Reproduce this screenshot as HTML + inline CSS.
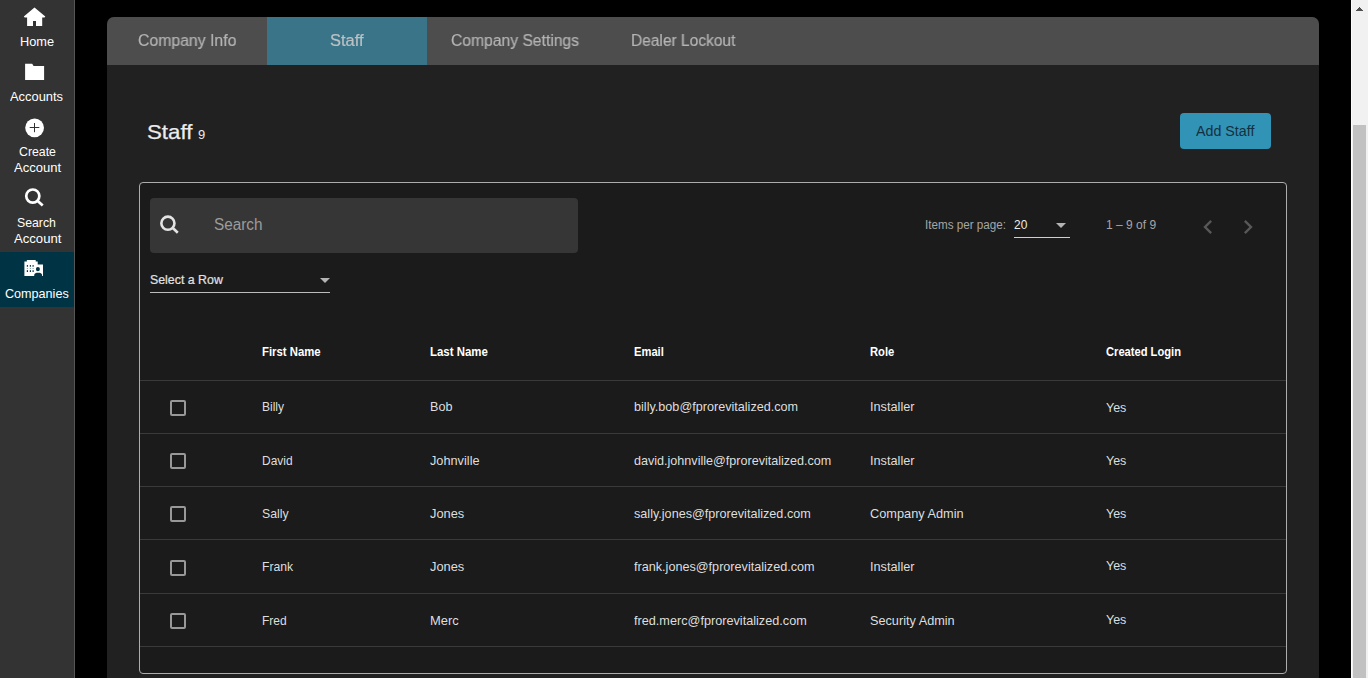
<!DOCTYPE html>
<html lang="en"><head><meta charset="utf-8"><title>Staff</title>
<style>
html,body{margin:0;padding:0;}
body{width:1368px;height:678px;overflow:hidden;background:#000;position:relative;
 font-family:"Liberation Sans",sans-serif;}
.t{position:absolute;white-space:nowrap;line-height:20px;transform-origin:0 50%;display:block;}
.a{position:absolute;}
.cb{position:absolute;left:170px;width:12px;height:12px;border:2px solid #989898;border-radius:2px;}
.ln{position:absolute;left:140px;width:1146px;height:1px;background:#3a3a3a;}
</style></head><body>
<div class="a" style="left:0;top:0;width:74px;height:678px;background:#333;border-right:1px solid #565656;"></div>
<div class="a" style="left:0;top:252px;width:74px;height:55px;background:#003344;"></div>
<span class="t" style="left:20.20px;top:31.50px;font-size:13px;color:#fff;transform:scaleX(0.9819);">Home</span>
<span class="t" style="left:10.40px;top:86.50px;font-size:13px;color:#fff;transform:scaleX(0.9925);">Accounts</span>
<span class="t" style="left:19.00px;top:141.50px;font-size:13px;color:#fff;transform:scaleX(0.9462);">Create</span>
<span class="t" style="left:13.70px;top:157.50px;font-size:13px;color:#fff;transform:scaleX(1.0043);">Account</span>
<span class="t" style="left:17.40px;top:212.50px;font-size:13px;color:#fff;transform:scaleX(0.9455);">Search</span>
<span class="t" style="left:13.50px;top:228.50px;font-size:13px;color:#fff;transform:scaleX(1.0085);">Account</span>
<span class="t" style="left:5.30px;top:283.50px;font-size:13px;color:#fff;transform:scaleX(0.9688);">Companies</span>
<svg class="a" style="left:0;top:0" width="74" height="320" viewBox="0 0 74 320">
<path fill="#fff" d="M34.5 7.5L45.3 16.5L44.5 17.4H42.2V26.1H36V21H33V26.1H27.1V17.4H24.7L23.8 16.5Z"/>
<path fill="#fff" d="M25.1 63.8H32.2L33.6 66H44.1V80H25.1Z"/>
<circle cx="34.6" cy="127.8" r="9.4" fill="#fff"/>
<rect x="29.7" y="127" width="9.6" height="1" fill="#333"/><rect x="34" y="123" width="1" height="9.2" fill="#333"/>
<circle cx="32.8" cy="196.05" r="6.55" fill="none" stroke="#fff" stroke-width="2.7"/>
<path d="M37.2 200.4L42.7 205.6" stroke="#fff" stroke-width="2.7" stroke-linecap="butt"/>
<path fill="#fff" d="M24.4 261.5H26.85V260H35.7V261.5H37.7V264.6H43V275.9H24.4Z"/>
<g fill="#003344">
<rect x="26.8" y="265.1" width="1.2" height="1.6"/><rect x="29.8" y="265.1" width="1.2" height="1.6"/><rect x="32.5" y="265.1" width="1.2" height="1.6"/>
<rect x="26.8" y="268.1" width="1.2" height="0.7" opacity=".6"/><rect x="29.8" y="268.1" width="1.2" height="0.7" opacity=".6"/><rect x="32.5" y="268.1" width="1.2" height="0.7" opacity=".6"/>
<rect x="26.8" y="270.2" width="1.2" height="1.8"/><rect x="29.8" y="270.2" width="1.2" height="1.8"/><rect x="32.5" y="270.2" width="1.2" height="1.8"/>
<ellipse cx="37.9" cy="269.1" rx="2.0" ry="2.2"/>
<path d="M34.2 276V274.9C34.2 273.2 36 272.7 38.1 272.7C40.2 272.7 42.1 273.2 42.1 274.9V276Z"/>
</g>
</svg>
<div class="a" style="left:107px;top:17px;width:1212px;height:700px;background:#212121;border-radius:7px 7px 0 0;"></div>
<div class="a" style="left:107px;top:17px;width:1212px;height:48px;background:#4d4d4d;border-radius:7px 7px 0 0;"></div>
<div class="a" style="left:267px;top:17px;width:160px;height:48px;background:#397489;"></div>
<span class="t" style="left:137.80px;top:31.06px;font-size:16px;color:#b4b4b4;transform:scaleX(0.9877);will-change:transform;-webkit-text-stroke:0.2px;">Company Info</span>
<span class="t" style="left:329.90px;top:31.06px;font-size:16px;color:#bcc1c4;transform:scaleX(1.0268);will-change:transform;-webkit-text-stroke:0.2px;">Staff</span>
<span class="t" style="left:451.10px;top:31.06px;font-size:16px;color:#b4b4b4;transform:scaleX(0.9790);will-change:transform;-webkit-text-stroke:0.2px;">Company Settings</span>
<span class="t" style="left:631.30px;top:31.06px;font-size:16px;color:#b4b4b4;transform:scaleX(0.9691);will-change:transform;-webkit-text-stroke:0.2px;">Dealer Lockout</span>
<span class="t" style="left:147.30px;top:121.52px;font-size:21px;color:#ececec;transform:scaleX(1.0589);-webkit-text-stroke:0.25px;">Staff</span>
<span class="t" style="left:197.80px;top:124.92px;font-size:13.5px;color:#ececec;transform:scaleX(0.9600);">9</span>
<div class="a" style="left:1180px;top:113px;width:91px;height:36px;background:#3193b6;border-radius:4px;"></div>
<span class="t" style="left:1196.10px;top:121.05px;font-size:14px;color:#15303f;transform:scaleX(1.0174);">Add Staff</span>
<div class="a" style="left:139px;top:182px;width:1146px;height:490px;background:#1b1b1b;border:1px solid #adadad;border-radius:4px;"></div>
<div class="a" style="left:150px;top:198px;width:428px;height:55px;background:#363636;border-radius:4px;"></div>
<svg class="a" style="left:150px;top:205px" width="40" height="40" viewBox="150 205 40 40"><circle cx="167.9" cy="223.2" r="6.55" fill="none" stroke="#e4e4e4" stroke-width="2.6"/><path d="M172.3 227.55L177.8 232.75" stroke="#e4e4e4" stroke-width="2.6"/></svg>
<span class="t" style="left:213.70px;top:214.76px;font-size:16px;color:#9c9c9c;transform:scaleX(0.9557);">Search</span>
<span class="t" style="left:150.10px;top:269.60px;font-size:13px;color:#e2e2e2;transform:scaleX(0.9511);-webkit-text-stroke:0.2px #e2e2e2;">Select a Row</span>
<div class="a" style="left:150px;top:292px;width:180px;height:1px;background:#bdbdbd;"></div>
<svg class="a" style="left:319px;top:277px" width="12" height="7" viewBox="0 0 12 7"><path d="M1 1h10L6 6z" fill="#b4b4b4"/></svg>
<span class="t" style="left:924.90px;top:214.64px;font-size:12px;color:#a6a6a6;transform:scaleX(0.9715);">Items per page:</span>
<span class="t" style="left:1014.00px;top:214.64px;font-size:12px;color:#ececec;transform:scaleX(0.9944);">20</span>
<svg class="a" style="left:1055px;top:222px" width="12" height="7" viewBox="0 0 12 7"><path d="M1 1h10L6 6z" fill="#b4b4b4"/></svg>
<div class="a" style="left:1014px;top:237px;width:56px;height:1px;background:#cfcfcf;"></div>
<span class="t" style="left:1106.10px;top:214.64px;font-size:12px;color:#a6a6a6;transform:scaleX(1.0000);">1 – 9 of 9</span>
<svg class="a" style="left:1194.4px;top:212.9px" width="28" height="28" viewBox="0 0 24 24"><path fill="#585858" d="M15.41 7.41L14 6l-6 6 6 6 1.41-1.41L10.83 12z"/></svg>
<svg class="a" style="left:1233.6px;top:212.9px" width="28" height="28" viewBox="0 0 24 24"><path fill="#585858" d="M10 6L8.59 7.41 13.17 12l-4.58 4.59L10 18l6-6z"/></svg>
<span class="t" style="left:261.60px;top:341.94px;font-size:12px;color:#fff;font-weight:700;transform:scaleX(0.9452);">First Name</span>
<span class="t" style="left:430.00px;top:341.94px;font-size:12px;color:#fff;font-weight:700;transform:scaleX(0.9531);">Last Name</span>
<span class="t" style="left:634.40px;top:341.94px;font-size:12px;color:#fff;font-weight:700;transform:scaleX(0.9313);">Email</span>
<span class="t" style="left:869.80px;top:341.94px;font-size:12px;color:#fff;font-weight:700;transform:scaleX(0.9346);">Role</span>
<span class="t" style="left:1106.00px;top:341.94px;font-size:12px;color:#fff;font-weight:700;transform:scaleX(0.9290);">Created Login</span>
<div class="ln" style="top:380px"></div>
<div class="ln" style="top:433px"></div>
<div class="ln" style="top:486px"></div>
<div class="ln" style="top:539px"></div>
<div class="ln" style="top:593px"></div>
<div class="ln" style="top:646px"></div>
<div class="cb" style="top:400px"></div>
<span class="t" style="left:261.60px;top:396.50px;font-size:13px;color:#dedede;transform:scaleX(0.9257);">Billy</span>
<span class="t" style="left:430.00px;top:396.50px;font-size:13px;color:#dedede;transform:scaleX(0.9686);">Bob</span>
<span class="t" style="left:634.40px;top:396.50px;font-size:13px;color:#dedede;transform:scaleX(0.9710);">billy.bob@fprorevitalized.com</span>
<span class="t" style="left:870.00px;top:396.50px;font-size:13px;color:#dedede;transform:scaleX(0.9780);">Installer</span>
<span class="t" style="left:1106.00px;top:397.50px;font-size:13px;color:#dedede;transform:scaleX(0.9600);">Yes</span>
<div class="cb" style="top:453px"></div>
<span class="t" style="left:261.60px;top:450.50px;font-size:13px;color:#dedede;transform:scaleX(0.9203);">David</span>
<span class="t" style="left:430.00px;top:450.50px;font-size:13px;color:#dedede;transform:scaleX(0.9798);">Johnville</span>
<span class="t" style="left:634.40px;top:450.50px;font-size:13px;color:#dedede;transform:scaleX(0.9676);">david.johnville@fprorevitalized.com</span>
<span class="t" style="left:870.00px;top:450.50px;font-size:13px;color:#dedede;transform:scaleX(0.9780);">Installer</span>
<span class="t" style="left:1106.00px;top:450.50px;font-size:13px;color:#dedede;transform:scaleX(0.9600);">Yes</span>
<div class="cb" style="top:506px"></div>
<span class="t" style="left:261.60px;top:503.50px;font-size:13px;color:#dedede;transform:scaleX(0.9458);">Sally</span>
<span class="t" style="left:430.00px;top:503.50px;font-size:13px;color:#dedede;transform:scaleX(0.9871);">Jones</span>
<span class="t" style="left:634.40px;top:503.50px;font-size:13px;color:#dedede;transform:scaleX(0.9709);">sally.jones@fprorevitalized.com</span>
<span class="t" style="left:870.00px;top:503.50px;font-size:13px;color:#dedede;transform:scaleX(0.9814);">Company Admin</span>
<span class="t" style="left:1106.00px;top:503.50px;font-size:13px;color:#dedede;transform:scaleX(0.9600);">Yes</span>
<div class="cb" style="top:560px"></div>
<span class="t" style="left:261.60px;top:556.50px;font-size:13px;color:#dedede;transform:scaleX(0.9378);">Frank</span>
<span class="t" style="left:430.00px;top:556.50px;font-size:13px;color:#dedede;transform:scaleX(0.9871);">Jones</span>
<span class="t" style="left:634.40px;top:556.50px;font-size:13px;color:#dedede;transform:scaleX(0.9716);">frank.jones@fprorevitalized.com</span>
<span class="t" style="left:870.00px;top:556.50px;font-size:13px;color:#dedede;transform:scaleX(0.9780);">Installer</span>
<span class="t" style="left:1106.00px;top:555.50px;font-size:13px;color:#dedede;transform:scaleX(0.9600);">Yes</span>
<div class="cb" style="top:613px"></div>
<span class="t" style="left:261.60px;top:610.50px;font-size:13px;color:#dedede;transform:scaleX(0.9234);">Fred</span>
<span class="t" style="left:430.00px;top:610.50px;font-size:13px;color:#dedede;transform:scaleX(0.9939);">Merc</span>
<span class="t" style="left:634.40px;top:610.50px;font-size:13px;color:#dedede;transform:scaleX(0.9749);">fred.merc@fprorevitalized.com</span>
<span class="t" style="left:870.00px;top:610.50px;font-size:13px;color:#dedede;transform:scaleX(0.9764);">Security Admin</span>
<span class="t" style="left:1106.00px;top:609.50px;font-size:13px;color:#dedede;transform:scaleX(0.9600);">Yes</span>
<div class="a" style="left:1351px;top:0;width:17px;height:678px;background:#f1f1f1;"></div>
<div class="a" style="left:1353px;top:125px;width:13px;height:560px;background:#c1c1c1;"></div>
<div class="a" style="left:1351px;top:0;width:1px;height:678px;background:#fcfcfc;"></div>
<div class="a" style="left:1359px;top:7px;width:1px;height:1px;background:#505050;"></div>
<div class="a" style="left:1358px;top:8px;width:3px;height:1px;background:#505050;"></div>
<div class="a" style="left:1357px;top:9px;width:5px;height:1px;background:#505050;"></div>
<div class="a" style="left:1356px;top:10px;width:7px;height:1px;background:#505050;"></div>
</body></html>
